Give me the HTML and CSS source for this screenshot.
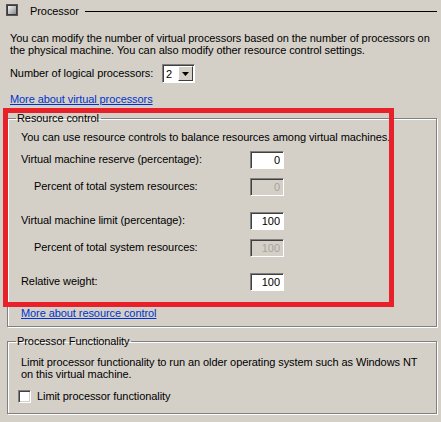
FILE: index.html
```html
<!DOCTYPE html>
<html>
<head>
<meta charset="utf-8">
<link rel="stylesheet" href="styles.css">
</head>
<body>
<div class="page">
  <div class="header">
    <svg class="cpu-icon" width="12" height="12" viewBox="0 0 12 12">
      <defs>
        <linearGradient id="g" x1="0" y1="0" x2="1" y2="1">
          <stop offset="0" stop-color="#f4f4f4"/>
          <stop offset="1" stop-color="#8c8c8c"/>
        </linearGradient>
      </defs>
      <rect x="0.5" y="0.5" width="11" height="11" fill="#3a3a3a" stroke="#555" />
      <rect x="2" y="2" width="8" height="8" fill="url(#g)"/>
    </svg>
    <span class="header-title">Processor</span>
    <span class="header-rule"></span>
  </div>

  <div class="section">
    <p class="desc">You can modify the number of virtual processors based on the number of processors on the physical machine. You can also modify other resource control settings.</p>
    <div class="proc-row">
      <span class="proc-label">Number of logical processors:</span>
      <span class="combo">
        <span class="combo-value">2</span>
        <span class="combo-btn">
          <svg width="7" height="4" viewBox="0 0 7 4"><path d="M0 0h7L3.5 4z" fill="#000"/></svg>
        </span>
      </span>
    </div>
    <a class="link" href="#">More about virtual processors</a>
  </div>

  <fieldset class="group group-resource">
    <legend>Resource control</legend>
    <div class="group-body">
      <p class="desc">You can use resource controls to balance resources among virtual machines.</p>
      <div class="field first">
        <span class="field-label">Virtual machine reserve (percentage):</span>
        <input class="num" type="text" value="0" readonly>
      </div>
      <div class="field sub">
        <span class="field-label indent">Percent of total system resources:</span>
        <input class="num disabled" type="text" value="0" disabled>
      </div>
      <div class="field">
        <span class="field-label">Virtual machine limit (percentage):</span>
        <input class="num" type="text" value="100" readonly>
      </div>
      <div class="field sub">
        <span class="field-label indent">Percent of total system resources:</span>
        <input class="num disabled" type="text" value="100" disabled>
      </div>
      <div class="field">
        <span class="field-label">Relative weight:</span>
        <input class="num" type="text" value="100" readonly>
      </div>
      <a class="link link-res" href="#">More about resource control</a>
    </div>
  </fieldset>

  <fieldset class="group group-func">
    <legend>Processor Functionality</legend>
    <div class="group-body func-body">
      <p class="desc">Limit processor functionality to run an older operating system such as Windows NT on this virtual machine.</p>
      <label class="check-row">
        <span class="checkbox"></span>
        <span>Limit processor functionality</span>
      </label>
    </div>
  </fieldset>

  <div class="highlight"></div>
</div>
</body>
</html>
```

FILE: styles.css
```css
* { box-sizing: border-box; }

html, body {
  margin: 0;
  padding: 0;
  background: #d4d0c8;
}

body {
  font-family: "Liberation Sans", Arial, sans-serif;
  font-size: 11px;
  line-height: 12px;
  letter-spacing: -0.08px;
  color: #000;
}

.page {
  position: relative;
  width: 441px;
  height: 422px;
  overflow: hidden;
}

.header {
  height: 22px;
  display: flex;
  align-items: center;
  padding-left: 6px;
  padding-right: 4px;
}

.cpu-icon {
  display: block;
  margin-top: -2px;
}

.header-title {
  margin-left: 12px;
}

.header-rule {
  flex: 1;
  height: 1px;
  background: #000;
  margin-left: 6px;
}

.section {
  padding-left: 10px;
}

.desc {
  margin: 0;
}

.section .desc {
  margin-top: 10px;
  width: 428px;
}

.proc-row {
  display: flex;
  align-items: center;
  height: 19px;
  margin-top: 8px;
}

.proc-label {
  width: 152px;
  padding-bottom: 1px;
}

.combo {
  display: flex;
  width: 33px;
  height: 19px;
  background: #fff;
  border-top: 1px solid #808080;
  border-left: 1px solid #808080;
  border-right: 1px solid #fff;
  border-bottom: 1px solid #fff;
  box-shadow: inset 1px 1px 0 #404040;
}

.combo-value {
  flex: 1;
  padding-left: 3px;
  padding-top: 3px;
}

.combo-btn {
  width: 15px;
  margin: 1px 1px 1px 0;
  background: #d4d0c8;
  border-top: 1px solid #fff;
  border-left: 1px solid #fff;
  border-right: 1px solid #404040;
  border-bottom: 1px solid #404040;
  display: flex;
  align-items: center;
  justify-content: center;
}

.link {
  display: block;
  width: max-content;
  color: #0033cc;
  text-decoration: underline;
  margin-top: 10px;
}

.group {
  margin: 7px 4px 0 7px;
  padding: 0;
  border: 1px solid #808080;
  box-shadow: inset 1px 1px 0 #fff, 1px 1px 0 #fff;
  min-width: 0;
}

.group legend {
  margin-left: 8px;
  padding: 0 2px 0 1px;
  line-height: 12px;
}

.group-body {
  padding: 7px 12px 7px 13px;
}

.field {
  display: flex;
  align-items: center;
  height: 18px;
  margin-top: 16px;
}

.field.first {
  margin-top: 8px;
}

.field.sub {
  margin-top: 9px;
}

.field-label {
  width: 229px;
  padding-bottom: 3px;
}

.field-label.indent {
  padding-left: 13px;
}

.num {
  width: 34px;
  height: 18px;
  margin: 0;
  padding: 0 3px 0 0;
  font: inherit;
  color: #000;
  text-align: right;
  background: #fff;
  border-top: 1px solid #808080;
  border-left: 1px solid #808080;
  border-right: 1px solid #fff;
  border-bottom: 1px solid #fff;
  box-shadow: inset 1px 1px 0 #404040;
  outline: none;
}

.num.disabled {
  background: #d4d0c8;
  color: #a8a49c;
  -webkit-text-fill-color: #a8a49c;
  opacity: 1;
}

.link-res {
  margin-top: 16px;
}

.group-func {
  margin-top: 8px;
}

.func-body {
  padding-top: 9px;
  padding-bottom: 10px;
}

.check-row {
  display: flex;
  align-items: center;
  height: 14px;
  margin-top: 9px;
  margin-left: -3px;
}

.checkbox {
  width: 13px;
  height: 13px;
  background: #fff;
  border-top: 1px solid #808080;
  border-left: 1px solid #808080;
  border-right: 1px solid #fff;
  border-bottom: 1px solid #fff;
  box-shadow: inset 1px 1px 0 #404040, inset -1px -1px 0 #d4d0c8;
  margin-right: 6px;
}

.highlight {
  position: absolute;
  left: 3px;
  top: 108px;
  width: 391px;
  height: 199px;
  border: 5px solid #e8202a;
  pointer-events: none;
}
```
